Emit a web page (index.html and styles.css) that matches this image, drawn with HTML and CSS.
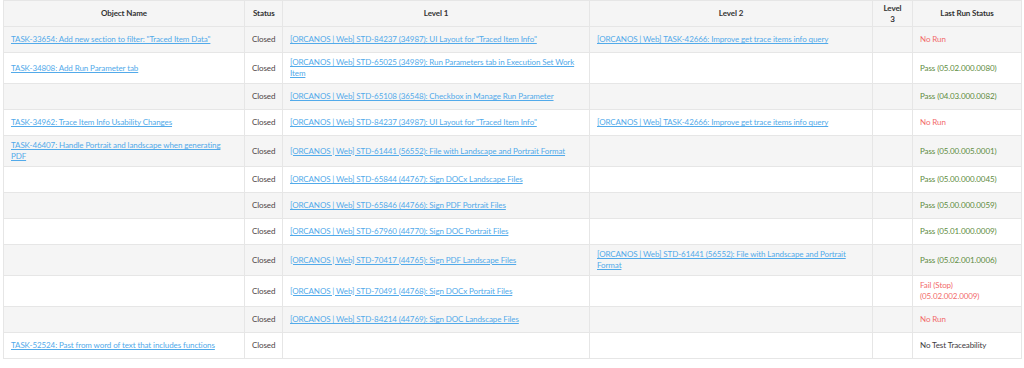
FILE: index.html
```html
<!DOCTYPE html>
<html>
<head>
<meta charset="utf-8">
<link rel="stylesheet" href="styles.css">
</head>
<body>
<table class="grid">
  <colgroup>
    <col class="c-name"><col class="c-status"><col class="c-l1"><col class="c-l2"><col class="c-l3"><col class="c-run">
  </colgroup>
  <thead>
    <tr>
      <th>Object Name</th><th>Status</th><th>Level 1</th><th>Level 2</th><th>Level 3</th><th>Last Run Status</th>
    </tr>
  </thead>
  <tbody>
    <tr>
      <td><a href="#">TASK-33654: Add new section to filter: "Traced Item Data"</a></td>
      <td class="st">Closed</td>
      <td><a href="#">[ORCANOS | Web] STD-84237 (34987): UI Layout for "Traced Item Info"</a></td>
      <td><a href="#">[ORCANOS | Web] TASK-42666: Improve get trace items info query</a></td>
      <td></td>
      <td class="norun">No Run</td>
    </tr>
    <tr>
      <td><a href="#">TASK-34808: Add Run Parameter tab</a></td>
      <td class="st">Closed</td>
      <td><a href="#">[ORCANOS | Web] STD-65025 (34989): Run Parameters tab in Execution Set Work Item</a></td>
      <td></td>
      <td></td>
      <td class="pass">Pass (05.02.000.0080)</td>
    </tr>
    <tr>
      <td></td>
      <td class="st">Closed</td>
      <td><a href="#">[ORCANOS | Web] STD-65108 (36548): Checkbox in Manage Run Parameter</a></td>
      <td></td>
      <td></td>
      <td class="pass">Pass (04.03.000.0082)</td>
    </tr>
    <tr>
      <td><a href="#">TASK-34962: Trace Item Info Usability Changes</a></td>
      <td class="st">Closed</td>
      <td><a href="#">[ORCANOS | Web] STD-84237 (34987): UI Layout for "Traced Item Info"</a></td>
      <td><a href="#">[ORCANOS | Web] TASK-42666: Improve get trace items info query</a></td>
      <td></td>
      <td class="norun">No Run</td>
    </tr>
    <tr>
      <td><a href="#">TASK-46407: Handle Portrait and landscape when generating PDF</a></td>
      <td class="st">Closed</td>
      <td><a href="#">[ORCANOS | Web] STD-61441 (56552): File with Landscape and Portrait Format</a></td>
      <td></td>
      <td></td>
      <td class="pass">Pass (05.00.005.0001)</td>
    </tr>
    <tr>
      <td></td>
      <td class="st">Closed</td>
      <td><a href="#">[ORCANOS | Web] STD-65844 (44767): Sign DOCx Landscape Files</a></td>
      <td></td>
      <td></td>
      <td class="pass">Pass (05.00.000.0045)</td>
    </tr>
    <tr>
      <td></td>
      <td class="st">Closed</td>
      <td><a href="#">[ORCANOS | Web] STD-65846 (44766): Sign PDF Portrait Files</a></td>
      <td></td>
      <td></td>
      <td class="pass">Pass (05.00.000.0059)</td>
    </tr>
    <tr>
      <td></td>
      <td class="st">Closed</td>
      <td><a href="#">[ORCANOS | Web] STD-67960 (44770): Sign DOC Portrait Files</a></td>
      <td></td>
      <td></td>
      <td class="pass">Pass (05.01.000.0009)</td>
    </tr>
    <tr>
      <td></td>
      <td class="st">Closed</td>
      <td><a href="#">[ORCANOS | Web] STD-70417 (44765): Sign PDF Landscape Files</a></td>
      <td><a href="#">[ORCANOS | Web] STD-61441 (56552): File with Landscape and Portrait Format</a></td>
      <td></td>
      <td class="pass">Pass (05.02.001.0006)</td>
    </tr>
    <tr>
      <td></td>
      <td class="st">Closed</td>
      <td><a href="#">[ORCANOS | Web] STD-70491 (44768): Sign DOCx Portrait Files</a></td>
      <td></td>
      <td></td>
      <td class="norun">Fail (Stop) (05.02.002.0009)</td>
    </tr>
    <tr>
      <td></td>
      <td class="st">Closed</td>
      <td><a href="#">[ORCANOS | Web] STD-84214 (44769): Sign DOC Landscape Files</a></td>
      <td></td>
      <td></td>
      <td class="norun">No Run</td>
    </tr>
    <tr>
      <td><a href="#">TASK-52524: Past from word of text that includes functions</a></td>
      <td class="st">Closed</td>
      <td></td>
      <td></td>
      <td></td>
      <td class="notrace">No Test Traceability</td>
    </tr>
  </tbody>
</table>
</body>
</html>
```
FILE: styles.css
```css
html, body {
  margin: 0;
  padding: 0;
  background: #ffffff;
}
body {
  padding: 0 3px;
  font-family: Lato, "Liberation Sans", sans-serif;
  font-size: 8px;
  letter-spacing: -0.1px;
  color: #4a4a4a;
}
.grid {
  width: 1018px;
  border-collapse: collapse;
  table-layout: fixed;
}
.c-name { width: 241px; }
.c-status { width: 38px; }
.c-l1 { width: 307px; }
.c-l2 { width: 283px; }
.c-l3 { width: 40px; }
.c-run { width: 109px; }
.grid th, .grid td {
  border: 1px solid #e6e6e6;
  text-align: left;
  vertical-align: middle;
}
.grid th {
  background: #f5f5f5;
  font-weight: bold;
  color: #333333;
  text-align: center;
  height: 26px;
  padding: 1px 8px;
  box-sizing: border-box;
  line-height: 11px;
}
.grid td {
  padding: 4px 7px;
  height: 26px;
  line-height: 11px;
  box-sizing: border-box;
}
.grid tbody tr:nth-child(odd) td { background: #f5f5f5; }
.grid a {
  color: #52aaea;
  text-decoration: underline;
}
.st { color: #4d4545; }
.pass { color: #5e8b3e; }
.norun { color: #f26b6b; }
.notrace { color: #3e3a40; }
```
